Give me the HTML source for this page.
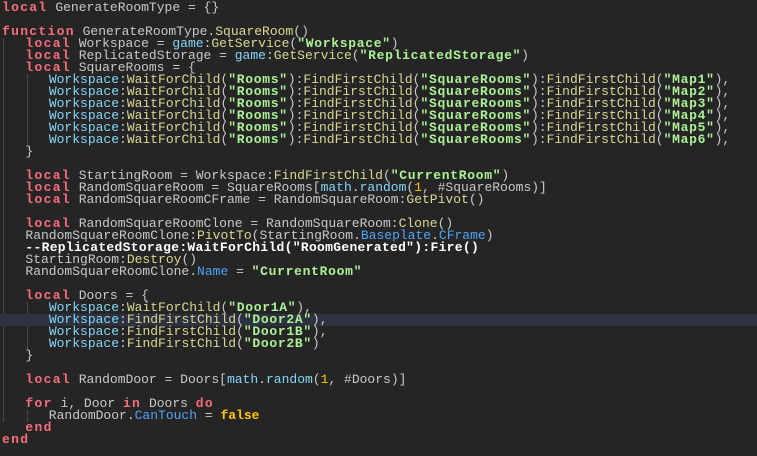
<!DOCTYPE html>
<html><head><meta charset="utf-8"><style>
html,body{margin:0;padding:0;background:#252525;width:757px;height:456px;overflow:hidden}
#c{position:relative;padding-top:2px;font-family:"Liberation Mono",monospace;font-size:13px;line-height:12px;color:#c8c8c8}
.l{height:12px;padding-left:2px;position:relative;white-space:pre}
.hl{background:#2c323f}
.k{color:#f86d7c;font-weight:bold;letter-spacing:1.3px}
.s{color:#adf195;font-weight:bold;letter-spacing:0.7px}
.b{color:#84d6f7}
.m{color:#dcd692}
.p{color:#4ea4f5}
.n{color:#ffc600}
.w{color:#ffffff;font-weight:bold;letter-spacing:0.3px}
.g{position:absolute;width:1px;background:#464646}
</style></head><body><div id="c"><div class="g" style="left:3px;top:38px;height:384px"></div><div class="g" style="left:27px;top:74px;height:72px"></div><div class="g" style="left:27px;top:302px;height:48px"></div><div class="g" style="left:27px;top:410px;height:12px"></div><div class="l"><span class="k">local</span> GenerateRoomType = {}</div><div class="l"> </div><div class="l"><span class="k">function</span> GenerateRoomType.<span class="m">SquareRoom</span>()</div><div class="l">   <span class="k">local</span> Workspace = <span class="b">game</span>:<span class="m">GetService</span>(<span class="s">"Workspace"</span>)</div><div class="l">   <span class="k">local</span> ReplicatedStorage = <span class="b">game</span>:<span class="m">GetService</span>(<span class="s">"ReplicatedStorage"</span>)</div><div class="l">   <span class="k">local</span> SquareRooms = {</div><div class="l">      <span class="b">Workspace</span>:<span class="m">WaitForChild</span>(<span class="s">"Rooms"</span>):<span class="m">FindFirstChild</span>(<span class="s">"SquareRooms"</span>):<span class="m">FindFirstChild</span>(<span class="s">"Map1"</span>),</div><div class="l">      <span class="b">Workspace</span>:<span class="m">WaitForChild</span>(<span class="s">"Rooms"</span>):<span class="m">FindFirstChild</span>(<span class="s">"SquareRooms"</span>):<span class="m">FindFirstChild</span>(<span class="s">"Map2"</span>),</div><div class="l">      <span class="b">Workspace</span>:<span class="m">WaitForChild</span>(<span class="s">"Rooms"</span>):<span class="m">FindFirstChild</span>(<span class="s">"SquareRooms"</span>):<span class="m">FindFirstChild</span>(<span class="s">"Map3"</span>),</div><div class="l">      <span class="b">Workspace</span>:<span class="m">WaitForChild</span>(<span class="s">"Rooms"</span>):<span class="m">FindFirstChild</span>(<span class="s">"SquareRooms"</span>):<span class="m">FindFirstChild</span>(<span class="s">"Map4"</span>),</div><div class="l">      <span class="b">Workspace</span>:<span class="m">WaitForChild</span>(<span class="s">"Rooms"</span>):<span class="m">FindFirstChild</span>(<span class="s">"SquareRooms"</span>):<span class="m">FindFirstChild</span>(<span class="s">"Map5"</span>),</div><div class="l">      <span class="b">Workspace</span>:<span class="m">WaitForChild</span>(<span class="s">"Rooms"</span>):<span class="m">FindFirstChild</span>(<span class="s">"SquareRooms"</span>):<span class="m">FindFirstChild</span>(<span class="s">"Map6"</span>),</div><div class="l">   }</div><div class="l"> </div><div class="l">   <span class="k">local</span> StartingRoom = Workspace:<span class="m">FindFirstChild</span>(<span class="s">"CurrentRoom"</span>)</div><div class="l">   <span class="k">local</span> RandomSquareRoom = SquareRooms[<span class="b">math</span>.<span class="b">random</span>(<span class="n">1</span>, #SquareRooms)]</div><div class="l">   <span class="k">local</span> RandomSquareRoomCFrame = RandomSquareRoom:<span class="m">GetPivot</span>()</div><div class="l"> </div><div class="l">   <span class="k">local</span> RandomSquareRoomClone = RandomSquareRoom:<span class="m">Clone</span>()</div><div class="l">   RandomSquareRoomClone:<span class="m">PivotTo</span>(StartingRoom.<span class="p">Baseplate</span>.<span class="p">CFrame</span>)</div><div class="l">   <span class="w">--ReplicatedStorage:WaitForChild("RoomGenerated"):Fire()</span></div><div class="l">   StartingRoom:<span class="m">Destroy</span>()</div><div class="l">   RandomSquareRoomClone.<span class="p">Name</span> = <span class="s">"CurrentRoom"</span></div><div class="l"> </div><div class="l">   <span class="k">local</span> Doors = {</div><div class="l">      <span class="b">Workspace</span>:<span class="m">WaitForChild</span>(<span class="s">"Door1A"</span>),</div><div class="l hl">      <span class="b">Workspace</span>:<span class="m">FindFirstChild</span>(<span class="s">"Door2A"</span>),</div><div class="l">      <span class="b">Workspace</span>:<span class="m">FindFirstChild</span>(<span class="s">"Door1B"</span>),</div><div class="l">      <span class="b">Workspace</span>:<span class="m">FindFirstChild</span>(<span class="s">"Door2B"</span>)</div><div class="l">   }</div><div class="l"> </div><div class="l">   <span class="k">local</span> RandomDoor = Doors[<span class="b">math</span>.<span class="b">random</span>(<span class="n">1</span>, #Doors)]</div><div class="l"> </div><div class="l">   <span class="k">for</span> i, Door <span class="k">in</span> Doors <span class="k">do</span></div><div class="l">      RandomDoor.<span class="p">CanTouch</span> = <span class="n" style="font-weight:bold">false</span></div><div class="l">   <span class="k">end</span></div><div class="l"><span class="k">end</span></div></div></body></html>
